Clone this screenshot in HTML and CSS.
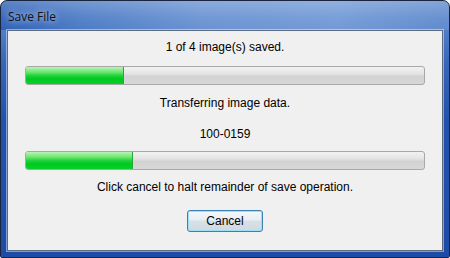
FILE: index.html
```html
<!DOCTYPE html>
<html>
<head>
<meta charset="utf-8">
<link rel="stylesheet" href="styles.css">
</head>
<body>
<div class="window">
  <div class="titlebar"><span class="title">Save File</span></div>
  <div class="frame">
    <div class="client">
      <div class="line l1">1 of 4 image(s) saved.</div>
      <div class="bar b1"><div class="fill" style="width:24.5%"></div></div>
      <div class="line l2">Transferring image data.</div>
      <div class="line l3">100-0159</div>
      <div class="bar b2"><div class="fill" style="width:26.8%"></div></div>
      <div class="line l4">Click cancel to halt remainder of save operation.</div>
      <button class="btn">Cancel</button>
    </div>
  </div>
</div>
</body>
</html>
```
FILE: styles.css
```css
html, body { margin: 0; padding: 0; background: #ffffff; }
body { width: 450px; height: 258px; overflow: hidden; font-family: "Liberation Sans", Arial, sans-serif; }
.window {
  width: 450px; height: 258px; box-sizing: border-box;
  border: 1px solid #18253d; border-radius: 7px 7px 2px 2px;
  background: linear-gradient(to right, #2f62b8 0%, #4d7cc6 18%, #6a93d2 45%, #729ad6 75%, #5f8bcd 100%);
  display: flex; flex-direction: column; overflow: hidden;
}
.titlebar {
  height: 29px; display: flex; align-items: center; padding-left: 7px;
  background: linear-gradient(to bottom, rgba(255,255,255,0.22) 0%, rgba(255,255,255,0.05) 60%, rgba(255,255,255,0) 100%);
}
.title { font-family: "Open Sans", "Noto Sans", sans-serif; font-size: 12px; color: #111; text-shadow: 0 0 6px rgba(255,255,255,0.85); margin-top: 1px; }
.frame {
  flex: 1; padding: 0 6px 6px 6px;
  background: linear-gradient(to bottom, #4f7fca 0%, #3566b9 15%, #2253ab 40%, #1d4ca6 100%);
  display: flex;
}
.client {
  flex: 1; background: #f0f0f0;
  border: 1px solid #5d6b80; box-shadow: 0 0 0 1px rgba(255,255,255,0.45);
  display: flex; flex-direction: column; align-items: center;
  padding-top: 9px; box-sizing: border-box;
}
.line { font-size: 12px; line-height: 14px; color: #000; text-align: center; }
.bar {
  width: 400px; height: 19px; box-sizing: border-box;
  border: 1px solid #a8a8a8; border-radius: 3px;
  background: linear-gradient(to bottom, #f2f2f2 0%, #e4e4e4 40%, #d2d2d2 55%, #d8d8d8 100%);
  overflow: hidden; display: flex;
}
.fill {
  height: 100%;
  background: linear-gradient(to bottom, #b5f5b5 0%, #6fe66f 30%, #1fd43f 50%, #00c81f 70%, #06d02a 100%);
  border-right: 1px solid #26a83a; box-sizing: border-box;
}
.b1 { margin-top: 12px; }
.l2 { margin-top: 11px; }
.l3 { margin-top: 17px; }
.b2 { margin-top: 10px; }
.l4 { margin-top: 10px; }
.btn {
  margin-top: 16px; width: 76px; height: 22px; box-sizing: border-box;
  font-family: "Liberation Sans", Arial, sans-serif; font-size: 12px; color: #000;
  border: 1px solid #3c7fb1; border-radius: 3px; padding: 0;
  background: linear-gradient(to bottom, #f4f8fb 0%, #e8eef3 45%, #d9e1e8 50%, #d0d9e0 100%);
  box-shadow: inset 0 0 0 1px #9be0f7;
}
```
